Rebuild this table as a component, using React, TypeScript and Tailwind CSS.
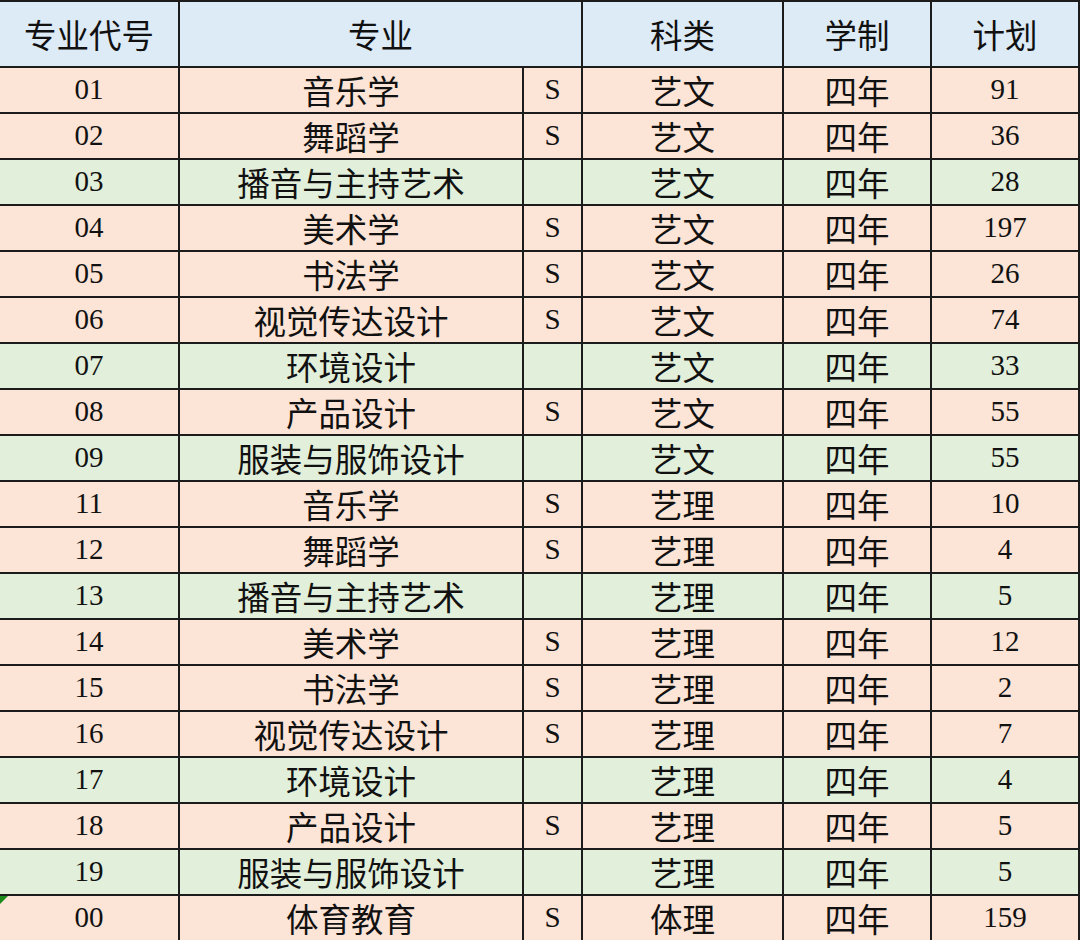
import React from "react";

const ROWS = [
  { code: "01", name: "音乐学", s: true, kind: "艺文", years: "四年", plan: "91" },
  { code: "02", name: "舞蹈学", s: true, kind: "艺文", years: "四年", plan: "36" },
  { code: "03", name: "播音与主持艺术", s: false, kind: "艺文", years: "四年", plan: "28" },
  { code: "04", name: "美术学", s: true, kind: "艺文", years: "四年", plan: "197" },
  { code: "05", name: "书法学", s: true, kind: "艺文", years: "四年", plan: "26" },
  { code: "06", name: "视觉传达设计", s: true, kind: "艺文", years: "四年", plan: "74" },
  { code: "07", name: "环境设计", s: false, kind: "艺文", years: "四年", plan: "33" },
  { code: "08", name: "产品设计", s: true, kind: "艺文", years: "四年", plan: "55" },
  { code: "09", name: "服装与服饰设计", s: false, kind: "艺文", years: "四年", plan: "55" },
  { code: "11", name: "音乐学", s: true, kind: "艺理", years: "四年", plan: "10" },
  { code: "12", name: "舞蹈学", s: true, kind: "艺理", years: "四年", plan: "4" },
  { code: "13", name: "播音与主持艺术", s: false, kind: "艺理", years: "四年", plan: "5" },
  { code: "14", name: "美术学", s: true, kind: "艺理", years: "四年", plan: "12" },
  { code: "15", name: "书法学", s: true, kind: "艺理", years: "四年", plan: "2" },
  { code: "16", name: "视觉传达设计", s: true, kind: "艺理", years: "四年", plan: "7" },
  { code: "17", name: "环境设计", s: false, kind: "艺理", years: "四年", plan: "4" },
  { code: "18", name: "产品设计", s: true, kind: "艺理", years: "四年", plan: "5" },
  { code: "19", name: "服装与服饰设计", s: false, kind: "艺理", years: "四年", plan: "5" },
  { code: "00", name: "体育教育", s: true, kind: "体理", years: "四年", plan: "159" },
];

const cjk = "font-['Noto_Sans_CJK_SC',sans-serif] text-[32.5px]";
const num = "font-['Liberation_Serif','Times_New_Roman',serif] text-[29px]";

function Head({ children, span }: { children: React.ReactNode; span?: boolean }) {
  return (
    <div
      className={`flex h-[64px] items-center justify-center bg-[#ddebf7] ${cjk} ${
        span ? "col-span-2" : ""
      }`}
    >
      {children}
    </div>
  );
}

export default function App() {
  return (
    <div className="h-[940px] w-[1080px] overflow-hidden bg-white text-[#111]">
      <div className="grid grid-cols-[178px_342px_57px_199px_146px_146px] gap-[2px] bg-[#1c1c1c] pr-[2px] pt-[2px]">
        <Head>专业代号</Head>
        <Head span>专业</Head>
        <Head>科类</Head>
        <Head>学制</Head>
        <Head>计划</Head>

        {ROWS.map((r, i) => {
          const bg = r.s ? "bg-[#fce4d6]" : "bg-[#e2efda]";
          const cell = `flex h-[44px] items-center justify-center ${bg}`;
          return (
            <React.Fragment key={r.code + i}>
              <div className={`relative ${cell} ${num}`}>
                {r.code === "00" && (
                  <svg className="absolute left-0 top-0" width="8" height="8" viewBox="0 0 8 8">
                    <polygon points="0,0 8,0 0,8" fill="#1a8a1a" />
                  </svg>
                )}
                {r.code}
              </div>
              <div className={`${cell} ${cjk}`}>{r.name}</div>
              <div className={`${cell} ${num}`}>{r.s ? "S" : ""}</div>
              <div className={`${cell} ${cjk}`}>{r.kind}</div>
              <div className={`${cell} ${cjk}`}>{r.years}</div>
              <div className={`${cell} ${num}`}>{r.plan}</div>
            </React.Fragment>
          );
        })}
      </div>
    </div>
  );
}
